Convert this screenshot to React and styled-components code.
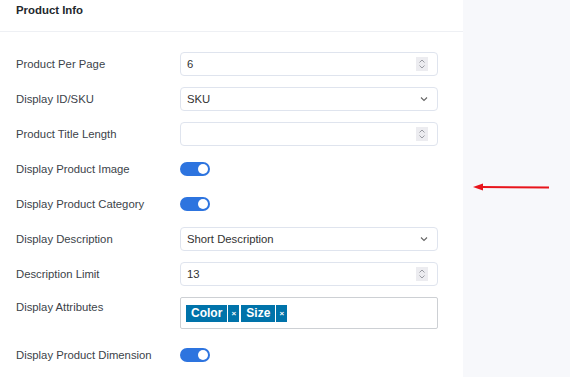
import React from "react";
import styled, { createGlobalStyle } from "styled-components";

const Global = createGlobalStyle`
  html, body { margin: 0; padding: 0; background: #f7f8fb; }
  body { font-family: "Liberation Sans", Arial, sans-serif; }
`;

const Page = styled.div`
  display: flex;
  width: 570px;
  height: 377px;
  overflow: hidden;
`;

const Panel = styled.div`
  width: 463px;
  background: #fff;
  flex-shrink: 0;
`;

const Header = styled.div`
  height: 32px;
  box-sizing: border-box;
  border-bottom: 1px solid #eef0f4;
  padding: 2px 16px 0;
  font-size: 11.4px;
  font-weight: bold;
  color: #23282d;
  line-height: 16px;
`;

const Body = styled.div`
  display: flex;
  flex-direction: column;
  gap: 11px;
  padding: 20px 25px 0 16px;
`;

const Row = styled.div`
  display: grid;
  grid-template-columns: 164px 258px;
  align-items: ${(p) => (p.$top ? "start" : "center")};
  min-height: 24px;
  margin-top: ${(p) => p.$mt || 0}px;
`;

const Label = styled.div`
  font-size: 11.3px;
  color: #3c434a;
  padding-top: ${(p) => p.$pt || 0}px;
`;

const Field = styled.div`
  height: 24px;
  box-sizing: border-box;
  border: 1px solid #dfe4ee;
  border-radius: 4px;
  display: flex;
  align-items: center;
  padding: 0 9px 0 6px;
  font-size: 11.3px;
  color: #333;
`;

const Value = styled.span`
  flex: 1;
`;

const Spin = styled.span`
  width: 12px;
  height: 14px;
  background: #ececf0;
  display: flex;
  align-items: center;
  justify-content: center;
`;

const Toggle = styled.span`
  width: 30px;
  height: 14px;
  border-radius: 7px;
  background: #2d74df;
  display: flex;
  align-items: center;
  justify-content: flex-end;
  padding-right: 2px;
  box-sizing: border-box;
  &::after {
    content: "";
    width: 10px;
    height: 10px;
    border-radius: 50%;
    background: #fff;
  }
`;

const TagBox = styled.div`
  height: 32px;
  box-sizing: border-box;
  border: 1px solid #cdd0d4;
  border-radius: 2px;
  display: flex;
  align-items: center;
  gap: 2px;
  padding: 0 0 0 5px;
`;

const Tag = styled.span`
  display: flex;
  height: 17px;
  background: #0073aa;
  color: #fff;
  font-size: 12px;
  font-weight: bold;
`;

const TagText = styled.span`
  padding: 0 5px;
  line-height: 17px;
  border-right: 1px solid #fff;
`;

const TagX = styled.span`
  width: 11px;
  font-size: 8px;
  line-height: 17px;
  text-align: center;
`;

const Side = styled.div`
  flex: 1;
  display: flex;
  align-items: flex-start;
  padding: 181px 0 0 10px;
`;

const SpinIcon = () => (
  <svg width="8" height="12" viewBox="0 0 8 12">
    <path d="M1.5 4.5 L4 2 L6.5 4.5 M1.5 7.5 L4 10 L6.5 7.5" stroke="#9a9ca3" strokeWidth="1" fill="none" />
  </svg>
);

const Chevron = () => (
  <svg width="8" height="6" viewBox="0 0 8 6">
    <path d="M1 1.5 L4 4.5 L7 1.5" stroke="#666" strokeWidth="1.1" fill="none" />
  </svg>
);

const NumberField = ({ value }) => (
  <Field>
    <Value>{value}</Value>
    <Spin>
      <SpinIcon />
    </Spin>
  </Field>
);

const SelectField = ({ value }) => (
  <Field>
    <Value>{value}</Value>
    <Chevron />
  </Field>
);

export default function App() {
  return (
    <Page>
      <Global />
      <Panel>
        <Header>Product Info</Header>
        <Body>
          <Row>
            <Label>Product Per Page</Label>
            <NumberField value="6" />
          </Row>
          <Row>
            <Label>Display ID/SKU</Label>
            <SelectField value="SKU" />
          </Row>
          <Row>
            <Label>Product Title Length</Label>
            <NumberField value="" />
          </Row>
          <Row>
            <Label>Display Product Image</Label>
            <Toggle />
          </Row>
          <Row>
            <Label>Display Product Category</Label>
            <Toggle />
          </Row>
          <Row>
            <Label>Display Description</Label>
            <SelectField value="Short Description" />
          </Row>
          <Row>
            <Label>Description Limit</Label>
            <NumberField value="13" />
          </Row>
          <Row $top>
            <Label $pt={4}>Display Attributes</Label>
            <TagBox>
              <Tag>
                <TagText>Color</TagText>
                <TagX>×</TagX>
              </Tag>
              <Tag>
                <TagText>Size</TagText>
                <TagX>×</TagX>
              </Tag>
            </TagBox>
          </Row>
          <Row $mt={3}>
            <Label>Display Product Dimension</Label>
            <Toggle />
          </Row>
        </Body>
      </Panel>
      <Side>
        <svg width="80" height="12" viewBox="0 0 80 12">
          <path d="M8 6 L76 6.5" stroke="#e8141b" strokeWidth="2" />
          <path d="M0 6 L10 2.5 L10 9.5 Z" fill="#e8141b" />
        </svg>
      </Side>
    </Page>
  );
}
